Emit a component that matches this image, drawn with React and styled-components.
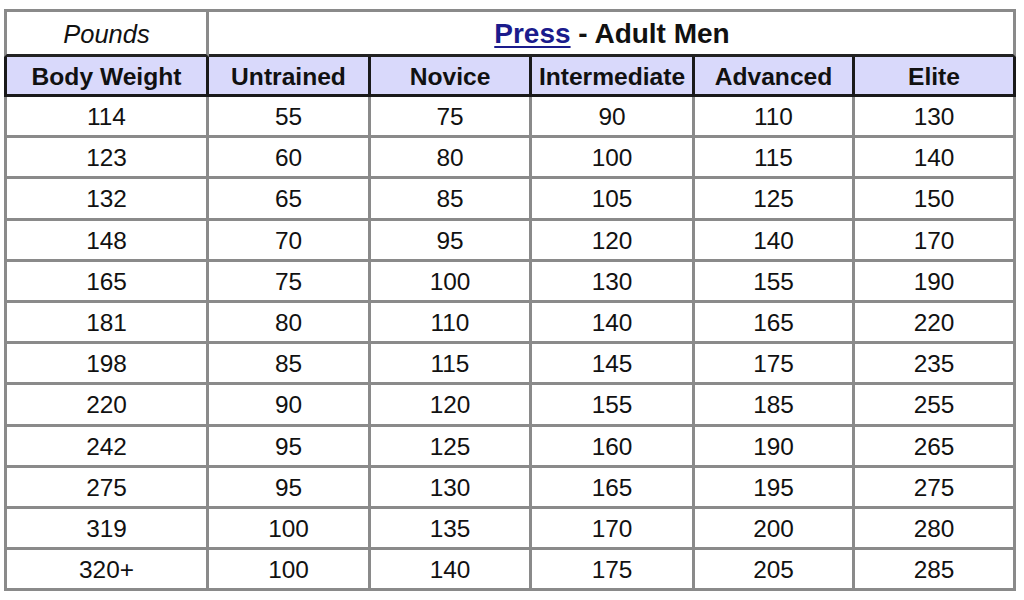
import React from "react";
import styled, { createGlobalStyle } from "styled-components";

const rows = [
  ["114", "55", "75", "90", "110", "130"],
  ["123", "60", "80", "100", "115", "140"],
  ["132", "65", "85", "105", "125", "150"],
  ["148", "70", "95", "120", "140", "170"],
  ["165", "75", "100", "130", "155", "190"],
  ["181", "80", "110", "140", "165", "220"],
  ["198", "85", "115", "145", "175", "235"],
  ["220", "90", "120", "155", "185", "255"],
  ["242", "95", "125", "160", "190", "265"],
  ["275", "95", "130", "165", "195", "275"],
  ["319", "100", "135", "170", "200", "280"],
  ["320+", "100", "140", "175", "205", "285"],
];

const levels = ["Body Weight", "Untrained", "Novice", "Intermediate", "Advanced", "Elite"];

const App = () => {
  return (
    <Page>
      <GlobalStyle />
      <Grid>
        <Cell $first $top $height={48} $bottom="#222">
          <Units>Pounds</Units>
        </Cell>
        <Cell $top $span={5} $height={48} $bottom="#222">
          <Title>
            <a href="#press">Press</a> - Adult Men
          </Title>
        </Cell>

        {levels.map((label, i) => (
          <Cell key={label} $first={i === 0} $header $height={40}>
            {label}
          </Cell>
        ))}

        {rows.map((row) =>
          row.map((value, i) => (
            <Cell key={row[0] + i} $first={i === 0} $height={41.2}>
              {value}
            </Cell>
          ))
        )}
      </Grid>
    </Page>
  );
};

export default App;

const GlobalStyle = createGlobalStyle`
  body {
    margin: 0;
    background: #ffffff;
    font-family: "Liberation Sans", Arial, sans-serif;
  }
`;

const Page = styled.div`
  padding: 9px 0 0 4px;
`;

const Grid = styled.div`
  display: grid;
  grid-template-columns: 205px 162px 161px 163px 160px 161px;
  width: 1012px;
  color: #111111;
`;

const Cell = styled.div`
  box-sizing: border-box;
  grid-column: span ${(p) => p.$span || 1};
  height: ${(p) => p.$height}px;
  display: flex;
  align-items: center;
  justify-content: center;
  padding-top: 2px;
  font-size: ${(p) => (p.$header ? 24.6 : 24.4)}px;
  font-weight: ${(p) => (p.$header ? 700 : 400)};
  background: ${(p) => (p.$header ? "#d9d9fb" : "#ffffff")};
  border-right: 3px solid ${(p) => (p.$header ? "#1a1a1a" : "#8a8a8a")};
  border-bottom: 3px solid
    ${(p) => (p.$header ? "#1a1a1a" : p.$bottom || "#8a8a8a")};
  border-left: ${(p) =>
    p.$first ? `3px solid ${p.$header ? "#1a1a1a" : "#8a8a8a"}` : "none"};
  border-top: ${(p) => (p.$top ? "3px solid #8a8a8a" : "none")};
  white-space: nowrap;
  overflow: hidden;
`;

const Units = styled.span`
  font-style: italic;
  font-size: 25.5px;
`;

const Title = styled.span`
  font-size: 28px;
  font-weight: 700;
  padding-left: 2px;

  a {
    color: #1b1b8c;
    text-decoration: underline;
    text-decoration-thickness: 2px;
    text-underline-offset: 3px;
  }
`;
